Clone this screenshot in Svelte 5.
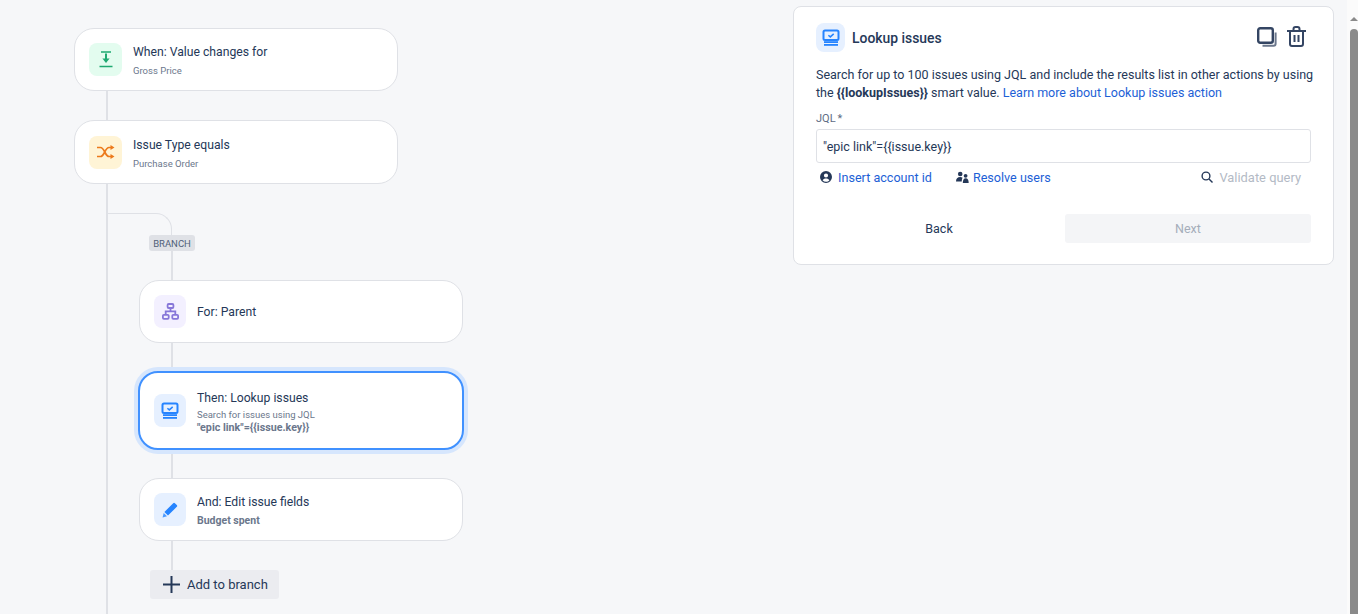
<script lang="ts">
  const jql = '"epic link"={{issue.key}}'
</script>

{#snippet lookupIcon(size)}
  <svg width={size} height={size} viewBox="0 0 20 20" fill="none">
    <rect x="2.500" y="2.500" width="15" height="9.500" rx="1.500" stroke="#2684ff" stroke-width="2" />
    <path d="M7.400 7.200l1.900 1.700 3.400-3" stroke="#2684ff" stroke-width="1.500" />
    <rect x="3" y="13.200" width="14" height="1.800" fill="#2684ff" />
    <rect x="3" y="16" width="14" height="1.800" fill="#2684ff" />
  </svg>
{/snippet}

<div class="page">
  <main class="canvas">
    <div class="node">
      <span class="badge green">
        <svg width="14" height="17" viewBox="0 0 14 17" fill="none">
          <path d="M2 1h10M0.500 15.500h13" stroke="#1fa971" stroke-width="1.600" />
          <path d="M7 2.500v6" stroke="#1fa971" stroke-width="2" />
          <path d="M3.400 7.500h7.200L7 12z" fill="#1fa971" />
        </svg>
      </span>
      <div class="text">
        <div class="title">When: Value changes for</div>
        <div class="sub">Gross Price</div>
      </div>
    </div>
    <div class="link"></div>
    <div class="node tall">
      <span class="badge yellow">
        <svg width="18" height="14" viewBox="0 0 18 14" fill="none">
          <path d="M0 2.500h3.500C7.500 2.500 8 11.500 12 11.500h3M0 11.500h3.500C7.500 11.500 8 2.500 12 2.500h3" stroke="#ec7a1c" stroke-width="1.700" />
          <path d="M13.500 0l4 2.500-4 2.500zM13.500 9l4 2.500-4 2.500z" fill="#ec7a1c" />
        </svg>
      </span>
      <div class="text">
        <div class="title">Issue Type equals</div>
        <div class="sub">Purchase Order</div>
      </div>
    </div>

    <div class="trunk">
      <div class="branch">
        <div class="curve"></div>
        <span class="chip">BRANCH</span>
        <div class="link"></div>
        <div class="node">
          <span class="badge purple">
            <svg width="17" height="17" viewBox="0 0 17 17" fill="none" stroke="#8777d9" stroke-width="1.800">
              <rect x="5.600" y="1" width="5.800" height="4" rx="1" />
              <rect x="0.900" y="11.800" width="5.800" height="4" rx="1" />
              <rect x="10.300" y="11.800" width="5.800" height="4" rx="1" />
              <path d="M8.500 5v3.400M3.700 11.800V8.400h9.600v3.400" />
            </svg>
          </span>
          <div class="text">
            <div class="title">For: Parent</div>
          </div>
        </div>
        <div class="link short"></div>
        <div class="node selected">
          <span class="badge blue">{@render lookupIcon(20)}</span>
          <div class="text">
            <div class="title">Then: Lookup issues</div>
            <div class="sub first">Search for issues using JQL</div>
            <div class="sub strong">{jql}</div>
          </div>
        </div>
        <div class="link short"></div>
        <div class="node">
          <span class="badge blue">
            <svg width="16" height="16" viewBox="0 0 16 16">
              <path d="M11.200 1.200a1.200 1.200 0 0 1 1.700 0l1.900 1.900a1.200 1.200 0 0 1 0 1.700L6 13.600 2.400 10z" fill="#2684ff" />
              <path d="M1.700 11l3.300 3.300-4.400 1.100z" fill="#4c9aff" />
            </svg>
          </span>
          <div class="text">
            <div class="title">And: Edit issue fields</div>
            <div class="sub strong">Budget spent</div>
          </div>
        </div>
        <div class="link"></div>
        <button class="add">
          <svg width="17" height="17" viewBox="0 0 17 17"><path d="M8.500 0v17M0 8.500h17" stroke="#253858" stroke-width="2" /></svg>
          Add to branch
        </button>
      </div>
    </div>
  </main>

  <section class="panel">
    <header class="panel-head">
      <span class="badge small blue">{@render lookupIcon(20)}</span>
      <h2>Lookup issues</h2>
      <div class="tools">
        <svg width="20" height="20" viewBox="0 0 20 20" fill="none">
          <path d="M18.600 5.500v11.200a2 2 0 0 1-2 2H5.500" stroke="#6b778c" stroke-width="2" />
          <rect x="1.200" y="1.200" width="14.600" height="14.600" rx="2" stroke="#344563" stroke-width="2.400" />
        </svg>
        <svg width="19" height="21" viewBox="0 0 19 21" fill="none" stroke="#344563" stroke-width="2">
          <path d="M0 5h19M6.500 5V3a2 2 0 0 1 2-2h2a2 2 0 0 1 2 2v2" />
          <path d="M3 5v13a2 2 0 0 0 2 2h9a2 2 0 0 0 2-2V5" />
          <path d="M7.500 9v7M11.500 9v7" />
        </svg>
      </div>
    </header>
    <p class="desc">
      Search for up to 100 issues using JQL and include the results list in other actions by using
      the <b>{'{{'}lookupIssues{'}}'}</b> smart value. <a href="#learn">Learn more about Lookup issues action</a>
    </p>
    <div class="label">JQL<span>*</span></div>
    <input class="jql" value={jql} />
    <div class="helpers">
      <a href="#id" class="helper">
        <svg width="12" height="12" viewBox="0 0 12 12">
          <path fill="#253858" fill-rule="evenodd" d="M6 0a6 6 0 1 1 0 12A6 6 0 0 1 6 0zm0 2.400a2.100 2.100 0 1 0 0 4.200 2.100 2.100 0 0 0 0-4.200zM6 7.600c-1.500 0-2.700.6-3.400 1.600A4.400 4.400 0 0 0 6 10.800c1.400 0 2.600-.6 3.400-1.600C8.700 8.200 7.500 7.600 6 7.600z" />
        </svg>
        Insert account id
      </a>
      <a href="#users" class="helper">
        <svg width="13" height="12" viewBox="0 0 13 12" fill="#253858">
          <circle cx="4.200" cy="3" r="2.300" />
          <circle cx="9.600" cy="4.800" r="1.900" />
          <path d="M0 10.500c0-3 1.500-4.500 4.200-4.500 1 0 1.800.2 2.400.7C6 7.500 5.800 8.600 5.800 10.500z" />
          <path d="M6.800 12c0-3 1-4.800 2.900-4.800s3 1.800 3 4.800z" />
        </svg>
        Resolve users
      </a>
      <span class="helper validate">
        <svg width="12" height="12" viewBox="0 0 12 12" fill="none" stroke="#253858" stroke-width="1.400">
          <circle cx="5" cy="5" r="3.900" />
          <path d="M8 8l3.500 3.500" />
        </svg>
        Validate query
      </span>
    </div>
    <div class="actions">
      <button class="btn">Back</button>
      <button class="btn next" disabled>Next</button>
    </div>
  </section>

  <div class="scrollbar">
    <span class="arrow"></span>
    <span class="thumb"></span>
  </div>
</div>

<style>
  :global(body) {
    margin: 0;
    overflow: hidden;
    background: #f6f7f9;
  }

  .page {
    display: flex;
    height: 614px;
    overflow: hidden;
    font-family: Roboto, 'Noto Sans', sans-serif;
    color: #253858;
  }

  .canvas {
    display: flex;
    flex-direction: column;
    box-sizing: border-box;
    flex: 0 0 793px;
    padding: 28px 0 0 74px;
  }

  .node {
    display: flex;
    align-items: center;
    gap: 11px;
    box-sizing: border-box;
    width: 324px;
    height: 63px;
    padding-left: 14px;
    border: 1px solid #dfe1e6;
    border-radius: 20px;
    background: #fff;
    position: relative;
    z-index: 1;
  }

  .node.tall {
    height: 64px;
  }

  .node.selected {
    width: 326px;
    height: 79px;
    margin-left: -1px;
    border: 2px solid #4091ff;
    box-shadow: 0 0 0 4px #d6e6fd;
  }

  .link {
    width: 2px;
    height: 29px;
    margin-left: 32px;
    background: #dfe1e6;
  }

  .link.short {
    height: 28px;
  }

  .badge {
    display: flex;
    align-items: center;
    justify-content: center;
    flex: none;
    width: 33px;
    height: 33px;
    border-radius: 8px;
  }

  .branch .badge {
    width: 32px;
  }

  .badge.small {
    width: 29px;
    height: 29px;
  }

  .green {
    background: #e3fcef;
  }

  .yellow {
    background: #fff4d6;
  }

  .purple {
    background: #f3f0ff;
  }

  .blue {
    background: #e6f0ff;
  }

  .text {
    min-width: 0;
    padding-top: 1px;
  }

  .selected .text {
    padding-top: 2px;
  }

  .title {
    font-size: 12.200px;
    line-height: 18px;
    color: #253858;
  }

  .sub {
    margin-top: 3px;
    font-size: 9.500px;
    line-height: 13px;
    color: #6b778c;
  }

  .sub.first {
    margin-top: 1px;
  }

  .sub.strong {
    font-size: 10.500px;
    font-weight: 700;
  }

  .sub.first + .sub.strong {
    margin-top: 0;
    font-size: 10.700px;
  }

  .trunk {
    flex: 1;
    width: 0;
    margin-left: 32px;
    padding-top: 29px;
    border-left: 2px solid #dfe1e6;
  }

  .branch {
    display: flex;
    flex-direction: column;
    align-items: flex-start;
    width: 400px;
    margin-left: 31px;
  }

  .curve {
    box-sizing: border-box;
    width: 64px;
    height: 22px;
    margin-left: -31px;
    border-top: 1px solid #dfe1e6;
    border-right: 1px solid #dfe1e6;
    border-top-right-radius: 16px;
  }

  .chip {
    box-sizing: border-box;
    width: 46px;
    height: 16px;
    margin-left: 10px;
    border-radius: 3px;
    background: #dfe1e6;
    font-size: 9.500px;
    line-height: 17px;
    text-align: center;
    color: #505f79;
  }

  .add {
    display: flex;
    align-items: center;
    gap: 7px;
    box-sizing: border-box;
    width: 129px;
    height: 29px;
    margin-left: 11px;
    padding: 0 0 0 13px;
    border: 0;
    border-radius: 3px;
    background: #ebecf0;
    font: inherit;
    font-size: 13px;
    color: #253858;
  }

  .panel {
    box-sizing: border-box;
    flex: 0 0 541px;
    height: 259px;
    margin-top: 6px;
    padding: 16px 22px 0;
    border: 1px solid #dfe1e6;
    border-radius: 8px;
    background: #fff;
  }

  .panel-head {
    display: flex;
    align-items: center;
    gap: 7px;
    height: 29px;
  }

  h2 {
    margin: 1px 0 0;
    font-size: 13.900px;
    font-weight: 500;
    color: #253858;
  }

  .tools {
    display: flex;
    align-items: center;
    gap: 10px;
    margin: -2px 5px 0 auto;
  }

  .desc {
    margin: 14px -8px 0 0;
    font-size: 12.500px;
    line-height: 18px;
    color: #253858;
  }

  .desc b {
    font-weight: 700;
  }

  a {
    color: #1d5fd6;
    text-decoration: none;
  }

  .label {
    margin-top: 10px;
    font-size: 11px;
    line-height: 14px;
    color: #5e6c84;
  }

  .label span {
    margin-left: 2px;
    color: #5e6c84;
  }

  .jql {
    display: block;
    box-sizing: border-box;
    width: 495px;
    height: 34px;
    margin-top: 3px;
    padding: 0 6px;
    border: 1px solid #dfe1e6;
    border-radius: 3px;
    background: #fff;
    font: inherit;
    font-size: 12.500px;
    color: #253858;
  }

  .helpers {
    display: flex;
    align-items: center;
    gap: 24px;
    height: 18px;
    margin-top: 5px;
    padding: 0 10px 0 4px;
    font-size: 12.600px;
  }

  .helper {
    display: flex;
    align-items: center;
    gap: 6px;
  }

  .helper:nth-child(2) {
    gap: 4px;
  }

  .validate {
    margin-left: auto;
    font-size: 12.900px;
    color: #b3bac5;
  }

  .actions {
    display: grid;
    grid-template-columns: 246px 246px;
    gap: 3px;
    margin-top: 28px;
  }

  .btn {
    height: 29px;
    border: 0;
    border-radius: 3px;
    background: #fff;
    font: inherit;
    font-size: 12.500px;
    color: #253858;
  }

  .next {
    background: #f4f5f7;
    color: #a5adba;
  }

  .scrollbar {
    display: flex;
    flex-direction: column;
    align-items: flex-end;
    flex: 0 0 11px;
    margin-left: 13px;
    background: #fbfbfb;
  }

  .arrow {
    width: 0;
    height: 0;
    margin: 17px 0 8px;
    border-left: 4px solid transparent;
    border-right: 4px solid transparent;
    border-bottom: 4px solid #8a8a8a;
  }

  .thumb {
    flex: 1;
    width: 8px;
    border-radius: 4px 4px 0 0;
    background: #8a8a8a;
  }
</style>
